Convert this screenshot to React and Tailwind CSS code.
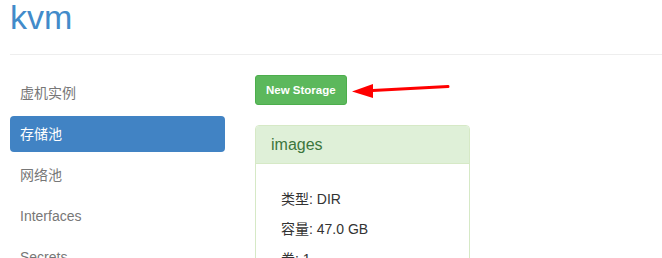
import React from "react";

const navItems = [
  { label: "虚机实例" },
  { label: "存储池", active: true },
  { label: "网络池" },
  { label: "Interfaces" },
  { label: "Secrets" },
];

function Arrow() {
  return (
    <svg
      className="pointer-events-none absolute left-0 top-0"
      width="662"
      height="258"
      viewBox="0 0 662 258"
    >
      <line x1="448" y1="86.5" x2="368" y2="90.8" stroke="#f00" strokeWidth="3" strokeLinecap="round" />
      <polygon points="352,91.5 373,84 373,98" fill="#f00" />
    </svg>
  );
}

export default function App() {
  return (
    <div
      className="relative h-[258px] w-[662px] overflow-hidden bg-white pl-[10px] text-[14px] text-[#333]"
      style={{ fontFamily: '"Liberation Sans", "Noto Sans CJK SC", sans-serif' }}
    >
      <h1 className="text-[34px] leading-[34px] text-[#428bca]">kvm</h1>
      <div className="mt-[20px] border-t border-[#eee]" />

      <div className="mt-[20px] flex">
        {/* sidebar */}
        <nav className="flex w-[215px] shrink-0 flex-col gap-[5px]">
          {navItems.map((item) => (
            <div
              key={item.label}
              className={
                item.active
                  ? "h-[36px] rounded-[4px] bg-[#4183c4] px-[10px] leading-[36px] text-white"
                  : "h-[36px] rounded-[4px] px-[10px] leading-[36px] text-[#777]"
              }
            >
              {item.label}
            </div>
          ))}
        </nav>

        {/* main */}
        <main className="ml-[30px]">
          <button className="h-[30px] rounded-[3px] border border-[#4cae4c] bg-[#5cb85c] px-[10px] text-[11.5px] font-bold leading-[28px] text-white">
            New Storage
          </button>

          <div className="mt-[20px] w-[215px] rounded-[4px] border border-[#d6e9c6]">
            <div className="h-[38px] rounded-t-[3px] border-b border-[#d6e9c6] bg-[#dff0d8] px-[15px] text-[16px] leading-[37px] text-[#3c763d]">
              images
            </div>
            <div className="px-[25px] pt-[25px]">
              <p className="mb-[10px] leading-[20px]">类型: DIR</p>
              <p className="mb-[10px] leading-[20px]">容量: 47.0 GB</p>
              <p className="mb-[10px] leading-[20px]">卷: 1</p>
            </div>
          </div>
        </main>
      </div>

      <Arrow />
    </div>
  );
}
